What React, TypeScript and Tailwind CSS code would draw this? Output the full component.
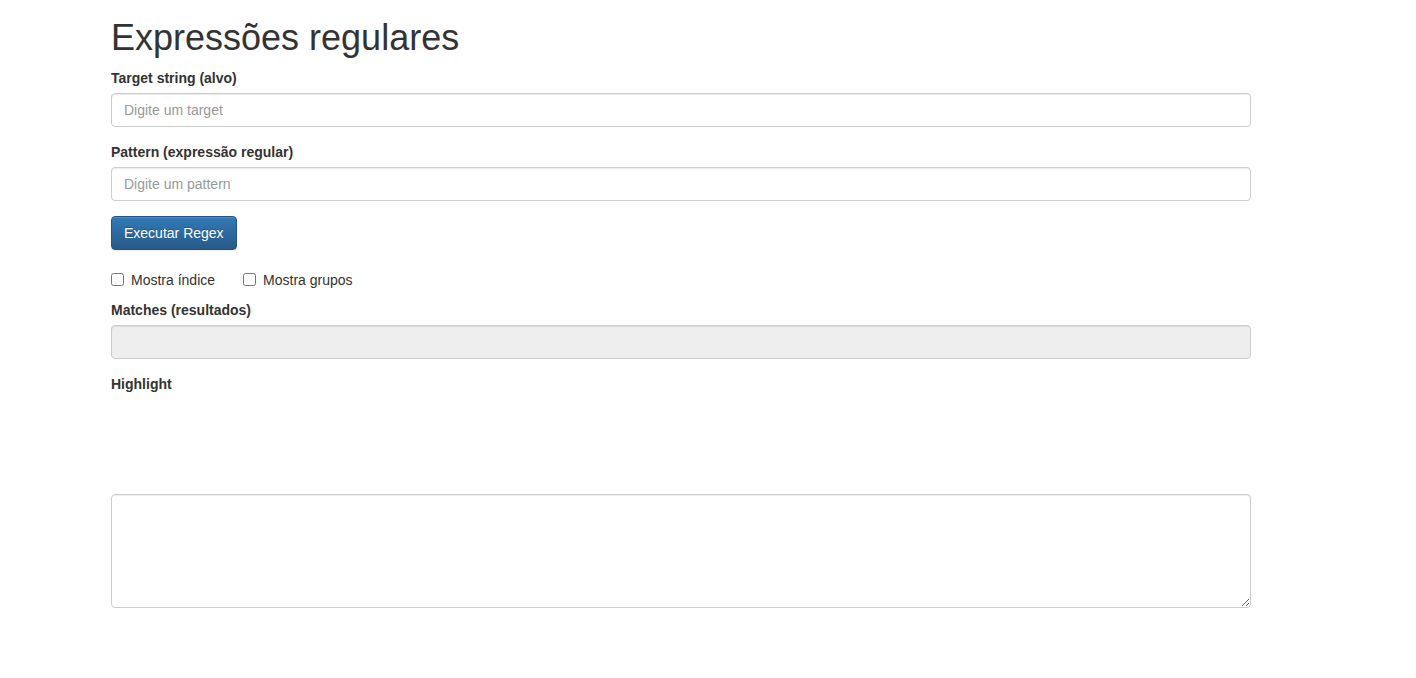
const font = { fontFamily: '"Liberation Sans", Arial, sans-serif' };

function Field({ label, placeholder }: { label: string; placeholder: string }) {
  return (
    <div className="mb-[15px]">
      <label className="block mb-[5px] text-sm leading-5 font-bold text-[#333]">{label}</label>
      <input
        type="text"
        placeholder={placeholder}
        className="block w-full h-[34px] px-3 py-[6px] text-sm text-[#555] bg-white border border-[#ccc] rounded shadow-[inset_0_1px_1px_rgba(0,0,0,0.075)] placeholder:text-[#999] outline-none"
      />
    </div>
  );
}

export default function App() {
  return (
    <div className="min-h-[678px] bg-white text-[#333] text-sm" style={font}>
      <div className="ml-[111px] w-[1140px]">
        <h1 className="pt-[18px] mb-[10px] text-[36px] leading-[1.1] font-normal text-[#333]">Expressões regulares</h1>

        <Field label="Target string (alvo)" placeholder="Digite um target" />
        <Field label="Pattern (expressão regular)" placeholder="Digite um pattern" />

        <button
          type="button"
          className="h-[34px] px-3 text-sm leading-5 text-white rounded border border-[#245580] bg-gradient-to-b from-[#337ab7] to-[#265a88] shadow-[inset_0_1px_0_rgba(255,255,255,0.15),0_1px_1px_rgba(0,0,0,0.075)]"
          style={{ textShadow: '0 -1px 0 rgba(0,0,0,0.2)' }}
        >
          Executar Regex
        </button>

        <div className="flex items-center gap-7 mt-5 h-5">
          <label className="flex items-center gap-[7px] leading-5">
            <input type="checkbox" className="m-0 w-[13px] h-[13px]" />
            Mostra índice
          </label>
          <label className="flex items-center gap-[7px] leading-5">
            <input type="checkbox" className="m-0 w-[13px] h-[13px]" />
            Mostra grupos
          </label>
        </div>

        <div className="mt-[10px] mb-[15px]">
          <label className="block mb-[5px] text-sm leading-5 font-bold text-[#333]">Matches (resultados)</label>
          <input
            type="text"
            disabled
            className="block w-full h-[34px] px-3 py-[6px] text-sm bg-[#eee] border border-[#ccc] rounded shadow-[inset_0_1px_1px_rgba(0,0,0,0.075)]"
          />
        </div>

        <label className="block text-sm leading-5 font-bold text-[#333]">Highlight</label>
        <div className="h-[100px]" />

        <textarea
          rows={5}
          className="block w-full h-[114px] px-3 py-[6px] text-sm leading-5 text-[#555] bg-white border border-[#ccc] rounded shadow-[inset_0_1px_1px_rgba(0,0,0,0.075)] outline-none"
        />
      </div>
    </div>
  );
}
